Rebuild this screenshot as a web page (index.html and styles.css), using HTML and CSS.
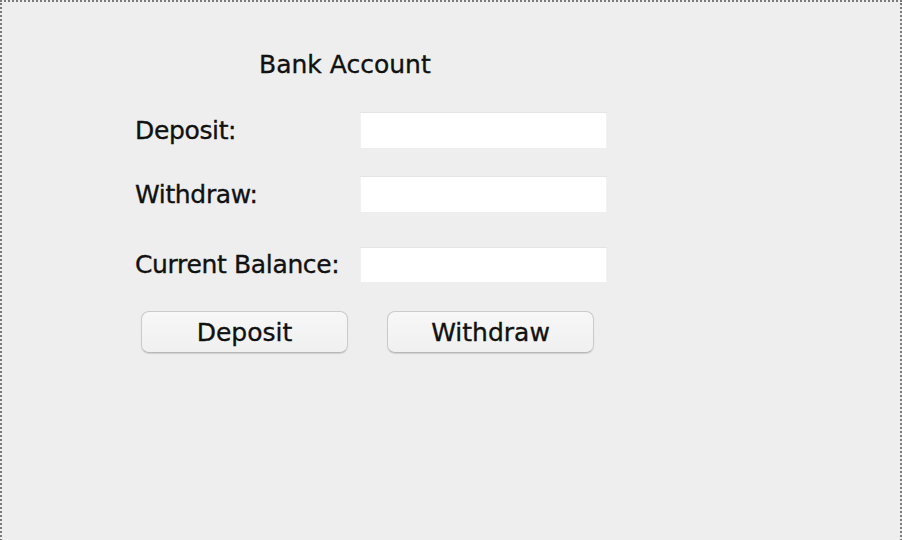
FILE: index.html
```html
<!DOCTYPE html>
<html lang="en">

<head>
    <meta charset="UTF-8">
    <meta name="viewport" content="width=device-width, initial-scale=1.0">
    <title>Bank Account</title>
    <link rel="stylesheet" href="styles.css">
</head>

<body>
    <div class="frame">
        <div class="panel">
            <h1 class="title">Bank Account</h1>

            <div class="form-row">
                <label for="deposit">Deposit:</label>
                <input type="text" id="deposit">
            </div>
            <div class="form-row row-withdraw">
                <label for="withdraw">Withdraw:</label>
                <input type="text" id="withdraw">
            </div>
            <div class="form-row row-balance">
                <label for="balance">Current Balance:</label>
                <input type="text" id="balance" readonly>
            </div>

            <div class="actions">
                <button class="btn">Deposit</button>
                <button class="btn">Withdraw</button>
            </div>
        </div>
    </div>
</body>

</html>
```

FILE: styles.css
```css
body {
    margin: 0;
    padding: 0;
    background-color: #eeeeee;
    font-family: "DejaVu Sans", Verdana, sans-serif;
    color: #111;
    -webkit-text-stroke: 0.35px #111;
}

.frame {
    min-height: 560px;
    border: 2px dotted #7a7a7a;
    border-bottom: none;
    box-sizing: border-box;
    background-color: #eeeeee;
}

.panel {
    padding: 48px 0 0 133px;
}

.title {
    margin: 0 0 32px 124px;
    font-size: 25px;
    font-weight: normal;
    line-height: 30px;
}

.form-row {
    display: flex;
    align-items: center;
    height: 36px;
}

.form-row label {
    width: 225px;
    font-size: 25px;
    line-height: 29px;
    letter-spacing: -0.35px;
}

.form-row input {
    width: 247px;
    height: 36px;
    box-sizing: border-box;
    border: none;
    background-color: #fff;
    box-shadow: inset 0 1px 0 #e4e4e4, inset 1px 0 0 #f2f2f2, inset -1px 0 0 #f2f2f2;
    font-size: 20px;
    font-family: inherit;
    outline: none;
}

.row-withdraw {
    margin-top: 28px;
}

.row-balance {
    margin-top: 35px;
    height: 35px;
}

.row-balance input {
    height: 35px;
}

.actions {
    display: flex;
    gap: 39px;
    margin: 29px 0 0 6px;
}

.btn {
    width: 207px;
    height: 42px;
    padding: 0;
    font-family: inherit;
    font-size: 25px;
    line-height: 29px;
    color: #111;
    background: linear-gradient(#f7f7f7, #f0f0f0);
    border: 1px solid #cbcbcb;
    border-bottom-color: #b8b8b8;
    border-radius: 8px;
    box-shadow: 0 1px 1px rgba(0, 0, 0, 0.12);
    cursor: pointer;
}
```
